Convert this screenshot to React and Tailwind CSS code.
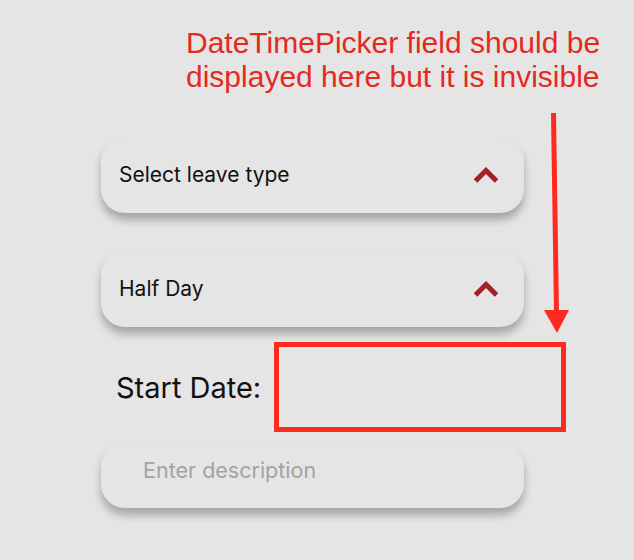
import React from 'react';

const cardShadow = 'shadow-[0_7px_9px_rgba(0,0,0,0.28)]';
const appFont = { fontFamily: 'Inter, "Liberation Sans", sans-serif' };

function ChevronUp() {
  return (
    <svg width="28" height="20" viewBox="0 0 28 20" fill="none">
      <path d="M3.5 16 L14 5.5 L24.5 16" stroke="#a3202a" strokeWidth="5" strokeLinejoin="miter" />
    </svg>
  );
}

function SelectField({ label }) {
  return (
    <div
      className={`w-[423px] h-[76px] rounded-[24px] bg-[#e5e5e5] ${cardShadow} flex items-center justify-between pl-[18px] pr-[24px]`}
    >
      <span className="text-[21px] text-[#111]" style={appFont}>
        {label}
      </span>
      <ChevronUp />
    </div>
  );
}

export default function App() {
  return (
    <div className="relative w-[634px] h-[560px] bg-[#e5e5e5] overflow-hidden">
      <div className="flex flex-col pl-[101px] pt-[137px]">
        <SelectField label="Select leave type" />
        <div className="h-[38px]" />
        <SelectField label="Half Day" />

        <div className="h-[116px] flex items-center pl-[15px] pt-[6px]">
          <span className="text-[29px] text-[#111]" style={appFont}>
            Start Date:
          </span>
        </div>

        <div className={`w-[423px] h-[65px] rounded-[24px] bg-[#e5e5e5] ${cardShadow} flex items-start pt-[11px] pl-[42px]`}>
          <span className="text-[21.5px] text-[#a3a3a3]" style={appFont}>
            Enter description
          </span>
        </div>
      </div>

      {/* annotation overlay */}
      <div
        className="absolute left-[186px] top-[26px] text-[30px] leading-[34px] text-[#e4291f]"
        style={{ fontFamily: '"Liberation Sans", Arial, sans-serif' }}
      >
        DateTimePicker field should be
        <br />
        displayed here but it is invisible
      </div>

      <svg className="absolute left-[540px] top-[108px]" width="35" height="230" viewBox="0 0 35 230">
        <line x1="13.5" y1="5" x2="16.5" y2="205" stroke="#ff2a1f" strokeWidth="5" />
        <polygon points="4,202 29,202 17,225" fill="#ff2a1f" />
      </svg>

      <div className="absolute left-[274px] top-[342px] w-[292px] h-[90px] border-[5px] border-[#ff2a1f]" />
    </div>
  );
}
